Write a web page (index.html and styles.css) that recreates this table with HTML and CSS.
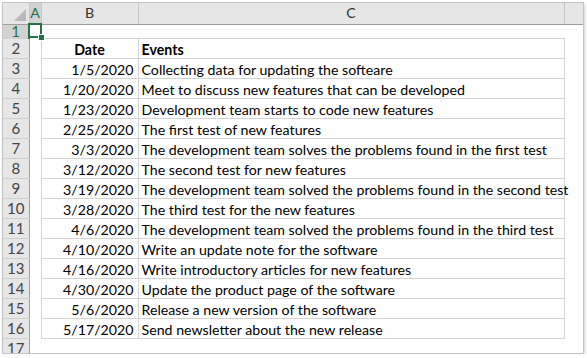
FILE: index.html
```html
<!DOCTYPE html>
<html lang="en">
<head>
    <meta charset="UTF-8">
    <title>Events timeline</title>
    <link rel="stylesheet" href="styles.css">
</head>
<body>
    <div class="window">
        <table class="sheet">
            <colgroup>
                <col class="col-rh">
                <col class="col-a">
                <col class="col-b">
                <col class="col-c">
                <col class="col-d">
            </colgroup>
            <tr class="head">
                <th class="corner"><span class="tri"></span></th>
                <th class="sel">A</th>
                <th>B</th>
                <th>C</th>
                <th></th>
            </tr>
            <tr class="r1">
                <th class="rh sel">1</th>
                <td></td><td></td><td></td><td></td>
            </tr>
            <tr>
                <th class="rh">2</th>
                <td></td>
                <td class="date hd center">Date</td>
                <td class="ev hd">Events</td>
                <td></td>
            </tr>
            <tr><th class="rh">3</th><td></td><td class="date">1/5/2020</td><td class="ev">Collecting data for updating the softeare</td><td></td></tr>
            <tr><th class="rh">4</th><td></td><td class="date">1/20/2020</td><td class="ev">Meet to discuss new features that can be developed</td><td></td></tr>
            <tr><th class="rh">5</th><td></td><td class="date">1/23/2020</td><td class="ev">Development team starts to code new features</td><td></td></tr>
            <tr><th class="rh">6</th><td></td><td class="date">2/25/2020</td><td class="ev">The first test of new features</td><td></td></tr>
            <tr><th class="rh">7</th><td></td><td class="date">3/3/2020</td><td class="ev">The development team solves the problems found in the first test</td><td></td></tr>
            <tr><th class="rh">8</th><td></td><td class="date">3/12/2020</td><td class="ev">The second test for new features</td><td></td></tr>
            <tr><th class="rh">9</th><td></td><td class="date">3/19/2020</td><td class="ev">The development team solved the problems found in the second test</td><td></td></tr>
            <tr><th class="rh">10</th><td></td><td class="date">3/28/2020</td><td class="ev">The third test for the new features</td><td></td></tr>
            <tr><th class="rh">11</th><td></td><td class="date">4/6/2020</td><td class="ev">The development team solved the problems found in the third test</td><td></td></tr>
            <tr><th class="rh">12</th><td></td><td class="date">4/10/2020</td><td class="ev">Write an update note for the software</td><td></td></tr>
            <tr><th class="rh">13</th><td></td><td class="date">4/16/2020</td><td class="ev">Write introductory articles for new features</td><td></td></tr>
            <tr><th class="rh">14</th><td></td><td class="date">4/30/2020</td><td class="ev">Update the product page of the software</td><td></td></tr>
            <tr><th class="rh">15</th><td></td><td class="date">5/6/2020</td><td class="ev">Release a new version of the software</td><td></td></tr>
            <tr><th class="rh">16</th><td></td><td class="date">5/17/2020</td><td class="ev">Send newsletter about the new release</td><td></td></tr>
            <tr><th class="rh">17</th><td></td><td></td><td></td><td></td></tr>
        </table>
        <div class="cursor"><span class="handle"></span></div>
    </div>
</body>
</html>
```

FILE: styles.css
```css
body {
    margin: 0;
    background: #fff;
    font-family: Lato, 'Liberation Sans', sans-serif;
    font-size: 14.2px;
    color: #000;
}

.window {
    position: relative;
    margin: 2px 0 0 2px;
    width: 580px;
    height: 350px;
    border: 1px solid #c4c4c4;
    box-shadow: 1px 2px 3px rgba(0,0,0,0.18);
    overflow: hidden;
    background: #fff;
}

.sheet {
    border-collapse: collapse;
    table-layout: fixed;
    width: 581px;
}

.col-rh { width: 26px; }
.col-a { width: 12px; }
.col-b { width: 97px; }
.col-c { width: 426px; }
.col-d { width: 20px; }

.sheet th,
.sheet td {
    padding: 0;
    height: 20px;
    box-sizing: border-box;
    white-space: nowrap;
    overflow: visible;
}

.head th {
    height: 21px;
    background: #e6e6e6;
    font-weight: normal;
    color: #333;
    border-right: 1px solid #c6c6c6;
    border-bottom: 1px solid #9e9e9e;
    text-align: center;
    line-height: 20px;
}

.head th:last-child {
    border-right: none;
}

.head .sel {
    background: #d2d2d2;
    color: #217346;
    border-bottom: 2px solid #217346;
}

.corner {
    position: relative;
}

.tri {
    position: absolute;
    right: 3px;
    bottom: 3px;
    width: 0;
    height: 0;
    border-left: 12px solid transparent;
    border-bottom: 12px solid #b9b9b9;
}

.r1 th,
.r1 td {
    height: 14px;
    line-height: 12px;
}

.rh {
    background: #e6e6e6;
    font-weight: normal;
    font-size: 15px;
    color: #444;
    text-align: center;
    line-height: 18px;
    border-right: 1px solid #9e9e9e;
    border-bottom: 1px solid #cfcfcf;
}

.rh.sel {
    background: #d2d2d2;
    color: #217346;
    border-right: 2px solid #217346;
}

.date,
.ev {
    border: 1px solid #d4d4d4;
    line-height: 17px;
    vertical-align: bottom;
}

.date {
    text-align: right;
    padding-right: 4px !important;
}

.date.center {
    text-align: center;
    padding-right: 0 !important;
}

.ev {
    text-align: left;
    padding-left: 3px !important;
}

.hd {
    font-weight: bold;
}

.cursor {
    position: absolute;
    left: 25px;
    top: 20px;
    width: 14px;
    height: 15px;
    border: 2px solid #217346;
    box-sizing: border-box;
}

.handle {
    position: absolute;
    right: -5px;
    bottom: -5px;
    width: 5px;
    height: 5px;
    background: #217346;
    border: 1px solid #fff;
}
```
